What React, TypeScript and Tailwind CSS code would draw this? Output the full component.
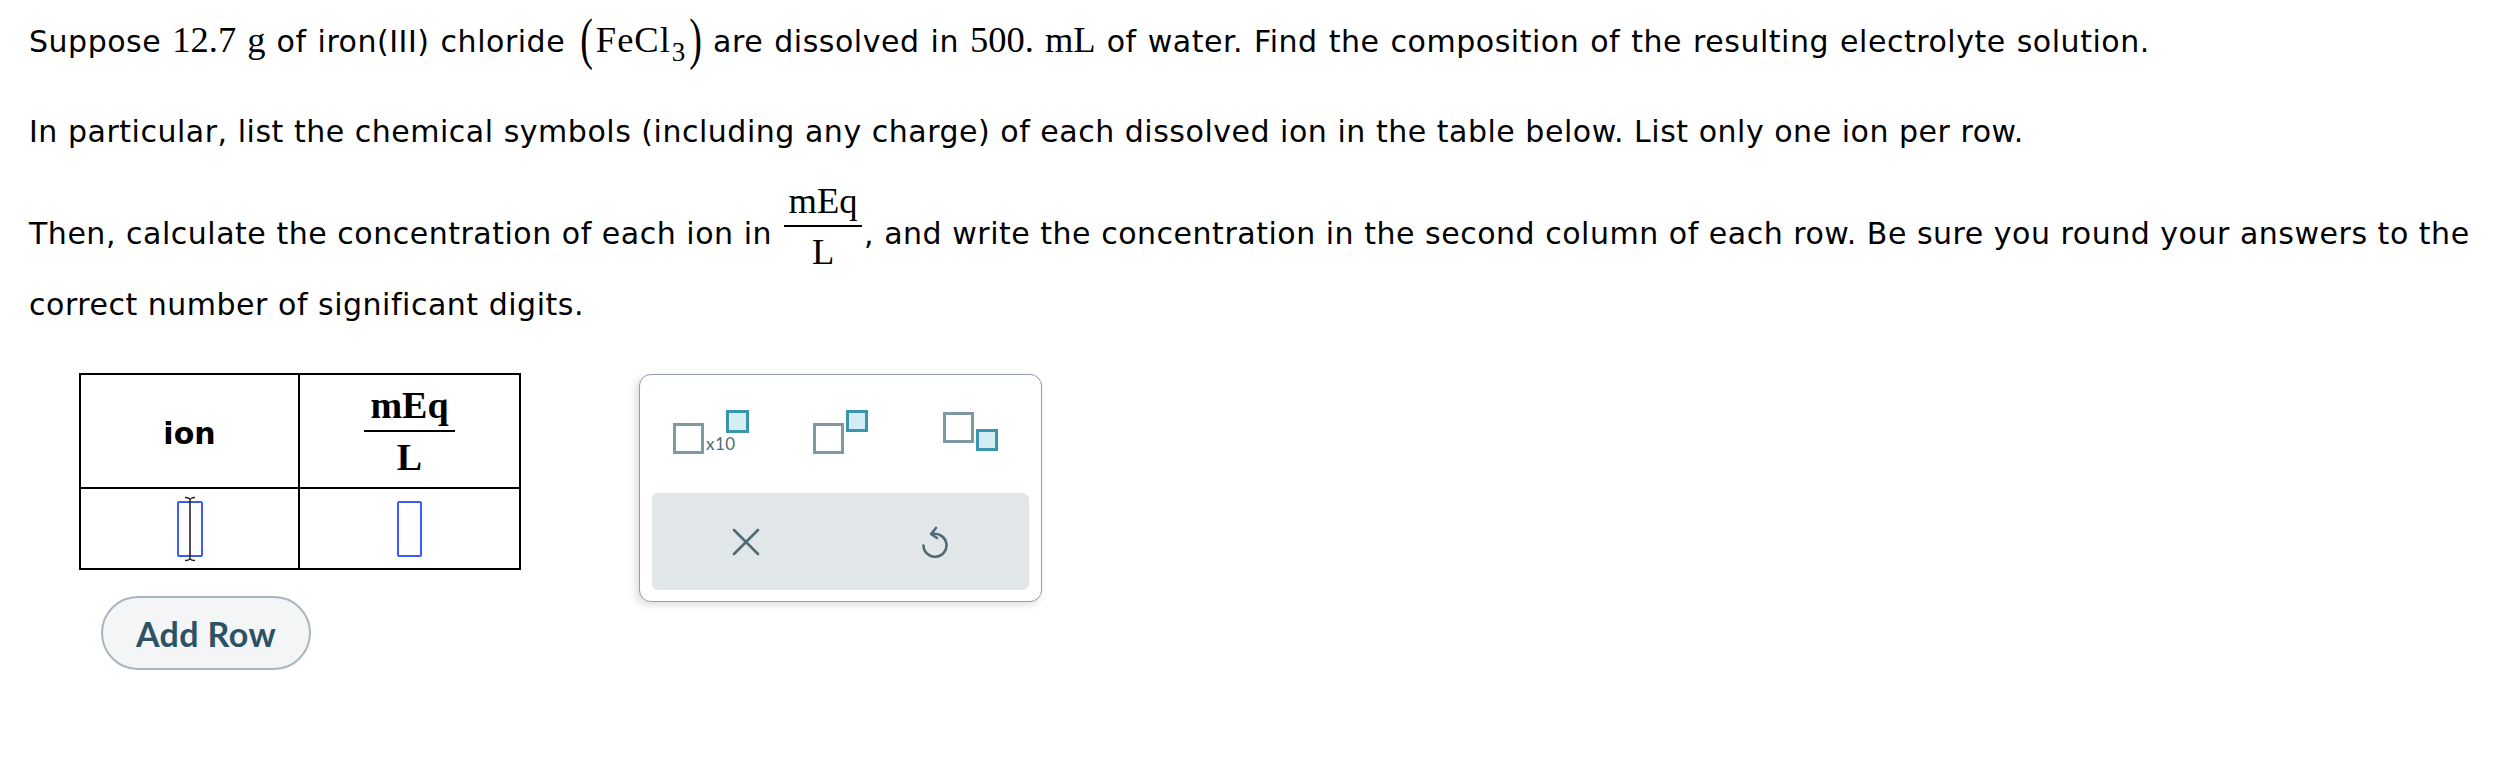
import React from "react";

function M({ children, className = "" }: { children: React.ReactNode; className?: string }) {
  return (
    <span className={"font-['Liberation_Serif','Times_New_Roman',serif] text-[36.5px] tracking-normal " + className}>
      {children}
    </span>
  );
}

function IBeam() {
  return (
    <svg className="pointer-events-none absolute left-1/2 top-1/2 -translate-x-1/2 -translate-y-1/2" width="12" height="66" viewBox="0 0 12 66">
      <path d="M1 1.5 C4 1.5 6 2.5 6 4.5 C6 2.5 8 1.5 11 1.5" fill="none" stroke="#222" strokeWidth="1.3" />
      <path d="M6 4.5 V61.5" stroke="#222" strokeWidth="1.6" />
      <path d="M1 64.5 C4 64.5 6 63.5 6 61.5 C6 63.5 8 64.5 11 64.5" fill="none" stroke="#222" strokeWidth="1.3" />
    </svg>
  );
}

export default function App() {
  return (
    <div className="min-h-screen w-full bg-white font-['DejaVu_Sans',Verdana,sans-serif] text-[30px] tracking-[0.52px] text-black">
      <div className="pl-[29px] pt-[17px]">
        <p className="whitespace-nowrap leading-[45px] [word-spacing:1px]">
          Suppose <M>12.7</M> <M>g</M> of iron(III) chloride{" "}
          <M className="ml-[4px]">
            <span className="inline-block scale-y-[1.5] text-[38px] font-light">(</span>
            <span className="ml-[3px] tracking-[1px]">FeCl</span>
            <sub className="relative top-[3px] ml-[1px] text-[27px] align-[-6px]">3</sub>
            <span className="ml-[4px] inline-block scale-y-[1.5] text-[38px] font-light">)</span>
          </M>{" "}
          are dissolved in <M>500.</M> <M>mL</M> of water. Find the composition of the resulting electrolyte solution.
        </p>
        <p className="mt-[45px] whitespace-nowrap leading-[45px]">
          In particular, list the chemical symbols (including any charge) of each dissolved ion in the table below. List only one ion per row.
        </p>
        <div className="mt-[29px] flex h-[102px] items-center whitespace-nowrap leading-[36px]">
          <span>Then, calculate the concentration of each ion in</span>
          <span className="ml-[12px] mr-[2px] flex w-[78px] flex-col items-center font-['Liberation_Serif','Times_New_Roman',serif] text-[36.5px] tracking-normal">
            <span className="pb-[6px] leading-[36px]">mEq</span>
            <span className="h-[2px] w-full bg-black" />
            <span className="pt-[7px] pb-[15px] leading-[36px]">L</span>
          </span>
          <span>, and write the concentration in the second column of each row. Be sure you round your answers to the</span>
        </div>
        <p className="mt-[-3px] whitespace-nowrap leading-[45px]">correct number of significant digits.</p>
      </div>

      <div className="mt-[46px] flex items-start gap-[118px] pl-[79px]">
        <div className="flex flex-col">
          <div className="w-[442px] border-2 border-black">
            <div className="grid grid-cols-[217px_2px_219px]">
              <div className="flex h-[112px] items-center justify-center pt-[4px] font-['DejaVu_Sans',Verdana,sans-serif] text-[30px] font-bold tracking-normal">
                ion
              </div>
              <div className="bg-black" />
              <div className="flex h-[112px] items-center justify-center">
                <div className="flex w-[91px] flex-col items-center font-['Liberation_Serif','Times_New_Roman',serif] text-[38px] font-bold tracking-normal">
                  <span className="pb-[6px] leading-[38px]">mEq</span>
                  <span className="h-[2px] w-full bg-black" />
                  <span className="pt-[6px] leading-[38px]">L</span>
                </div>
              </div>
              <div className="col-span-3 h-[2px] bg-black" />
              <div className="flex h-[79px] items-center justify-center">
                <div className="relative h-[56px] w-[26px] rounded-[2px] border-2 border-[#3d5afe]">
                  <IBeam />
                </div>
              </div>
              <div className="bg-black" />
              <div className="flex h-[79px] items-center justify-center">
                <div className="h-[56px] w-[25px] rounded-[2px] border-2 border-[#3d5afe]" />
              </div>
            </div>
          </div>
          <button className="ml-[22px] mt-[26px] flex h-[74px] w-[210px] items-center justify-center rounded-full border-2 border-[#a7b6bc] bg-[#f3f5f7] font-['Lato',sans-serif] text-[34px] font-bold tracking-[0.4px] text-[#2c5263]">
            Add Row
          </button>
        </div>

        <div className="mt-[1px] w-[403px] rounded-[12px] border border-[#8ca1a9] bg-white px-[12px] pb-[11px] shadow-[-3px_3px_8px_rgba(0,0,0,0.14)]">
          <div className="grid h-[118px] grid-cols-3 items-center pb-[4px]">
            <div className="flex justify-center pr-[8px]">
              <svg width="76" height="44" viewBox="0 0 76 44">
                <rect x="1.5" y="14.5" width="28" height="28" fill="white" stroke="#7f99a2" strokeWidth="3" />
                <rect x="54.5" y="1.5" width="20" height="20" fill="#d4edf3" stroke="#3a95ae" strokeWidth="3" />
                <text x="33" y="40" fontSize="17" fill="#4f6b75" fontFamily="Lato, sans-serif">x10</text>
              </svg>
            </div>
            <div className="flex justify-center">
              <svg width="55" height="44" viewBox="0 0 55 44">
                <rect x="1.5" y="14.5" width="28" height="28" fill="white" stroke="#7f99a2" strokeWidth="3" />
                <rect x="34.5" y="1.5" width="19" height="19" fill="#d4edf3" stroke="#3a95ae" strokeWidth="3" />
              </svg>
            </div>
            <div className="flex justify-center pl-[8px]">
              <svg width="55" height="41" viewBox="0 0 55 41">
                <rect x="1.5" y="1.5" width="28" height="28" fill="white" stroke="#7f99a2" strokeWidth="3" />
                <rect x="34.5" y="18.5" width="19" height="19" fill="#d4edf3" stroke="#3a95ae" strokeWidth="3" />
              </svg>
            </div>
          </div>
          <div className="grid h-[97px] grid-cols-2 items-center rounded-[6px] bg-[#e1e6e9]">
            <div className="flex justify-center">
              <svg width="28" height="28" viewBox="0 0 28 28">
                <path d="M2 2 L26 26 M26 2 L2 26" stroke="#4e6b75" strokeWidth="2.6" strokeLinecap="round" />
              </svg>
            </div>
            <div className="flex justify-center">
              <svg width="30" height="32" viewBox="0 0 30 32">
                <path d="M13 8 A11.5 11.5 0 1 1 3.5 19.5" fill="none" stroke="#4e6b75" strokeWidth="2.6" strokeLinecap="round" />
                <path d="M16 2 L11 8 L17 12" fill="none" stroke="#4e6b75" strokeWidth="2.6" strokeLinecap="round" strokeLinejoin="round" />
              </svg>
            </div>
          </div>
        </div>
      </div>
    </div>
  );
}
